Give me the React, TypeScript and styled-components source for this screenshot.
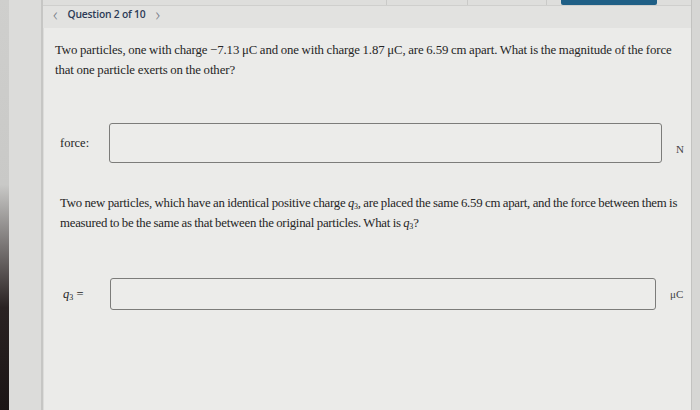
import { createGlobalStyle, styled } from 'styled-components';

const Global = createGlobalStyle`
  html, body {
    margin: 0;
    padding: 0;
    background: #e6e6e4;
  }
`;

const Page = styled.div`
  display: flex;
  width: 700px;
  height: 410px;
  overflow: hidden;
`;

const EdgeStrip = styled.div`
  width: 9px;
  background: linear-gradient(#cfcfcd 0%, #c9c9c7 45%, #2a2222 75%, #1b1515 100%);
`;

const Sidebar = styled.div`
  width: 32px;
  background: #dcdcda;
  border-right: 2px solid #c6c6c4;
`;

const Main = styled.div`
  flex: 1;
  display: flex;
  flex-direction: column;
  background: #e2e2e0;
`;

const Toolbar = styled.div`
  display: flex;
  height: 5px;
  border-bottom: 1px solid #cfcfcd;
  background: #dededc;
`;

const ToolSeg = styled.div<{ $w: number }>`
  width: ${(p) => p.$w}px;
  border-right: 1px solid #cacac8;
`;

const BlueButton = styled.div`
  width: 96px;
  margin-left: 14px;
  background: #1f5f86;
  border-radius: 0 0 2px 2px;
`;

const NavBar = styled.div`
  display: flex;
  align-items: center;
  height: 22px;
  box-sizing: border-box;
  padding: 0 0 6px 10px;
  gap: 10px;
  font-family: 'Open Sans', 'Liberation Sans', sans-serif;
  color: #2c3a56;
`;

const Arrow = styled.span`
  font-size: 18px;
  line-height: 16px;
  color: #737884;
  font-weight: 300;
`;

const NavTitle = styled.span`
  font-size: 10.3px;
  line-height: 16px;
  font-weight: 600;
  letter-spacing: -0.2px;
`;

const Content = styled.div`
  flex: 1;
  background: #ebebe9;
  border-left: 1px solid #dcdcda;
  padding: 12px 0 0 11px;
  font-family: 'Liberation Serif', 'DejaVu Serif', serif;
  color: #262626;
  white-space: nowrap;
`;

const Question = styled.p<{ $indent?: number; $top?: number; $track: number }>`
  margin: ${(p) => p.$top ?? 0}px 0 0;
  padding-left: ${(p) => p.$indent ?? 0}px;
  font-size: 12.8px;
  line-height: 20px;
  letter-spacing: ${(p) => p.$track}px;
  word-spacing: -0.4px;
`;

const AnswerRow = styled.div<{ $top: number; $indent: number }>`
  display: flex;
  align-items: center;
  margin-top: ${(p) => p.$top}px;
  padding-left: ${(p) => p.$indent}px;
`;

const Label = styled.span<{ $w: number }>`
  width: ${(p) => p.$w}px;
  font-size: 12.5px;
`;

const Field = styled.div<{ $w: number; $h: number }>`
  width: ${(p) => p.$w}px;
  height: ${(p) => p.$h}px;
  box-sizing: border-box;
  border: 1.5px solid #7c7c7a;
  border-radius: 3px;
  background: #ececea;
`;

const Unit = styled.span<{ $pad: number; $drop: number }>`
  padding-left: ${(p) => p.$pad}px;
  margin-top: ${(p) => p.$drop}px;
  font-size: 11px;
  color: #444;
`;

const Var = styled.i`
  font-size: 12.5px;
`;

const Sub = styled.sub`
  font-size: 8px;
  line-height: 0;
  vertical-align: -2px;
`;

const RightEdge = styled.div`
  width: 8px;
  background: #d6d6d4;
  border-left: 1px solid #c2c2c0;
`;

export default function App() {
  return (
    <>
      <Global />
      <Page>
        <EdgeStrip />
        <Sidebar />
        <Main>
          <Toolbar>
            <ToolSeg $w={343} />
            <ToolSeg $w={80} />
            <ToolSeg $w={78} />
            <BlueButton />
          </Toolbar>
          <NavBar>
            <Arrow>‹</Arrow>
            <NavTitle>Question 2 of 10</NavTitle>
            <Arrow>›</Arrow>
          </NavBar>
          <Content>
            <Question $track={-0.1}>
              Two particles, one with charge −7.13 μC and one with charge 1.87 μC, are 6.59 cm apart. What is the
              magnitude of the force
              <br />
              that one particle exerts on the other?
            </Question>
            <AnswerRow $top={43} $indent={5}>
              <Label $w={49}>force:</Label>
              <Field $w={553} $h={40} />
              <Unit $pad={14} $drop={12}>N</Unit>
            </AnswerRow>
            <Question $indent={5} $top={30} $track={-0.23}>
              Two new particles, which have an identical positive charge <Var>q</Var>
              <Sub>3</Sub>, are placed the same 6.59 cm apart, and the force between them is
              <br />
              measured to be the same as that between the original particles. What is <Var>q</Var>
              <Sub>3</Sub>?
            </Question>
            <AnswerRow $top={45} $indent={8}>
              <Label $w={47}>
                <Var>q</Var>
                <Sub>3</Sub> =
              </Label>
              <Field $w={546} $h={32} />
              <Unit $pad={14} $drop={0}>μC</Unit>
            </AnswerRow>
          </Content>
        </Main>
        <RightEdge />
      </Page>
    </>
  );
}
